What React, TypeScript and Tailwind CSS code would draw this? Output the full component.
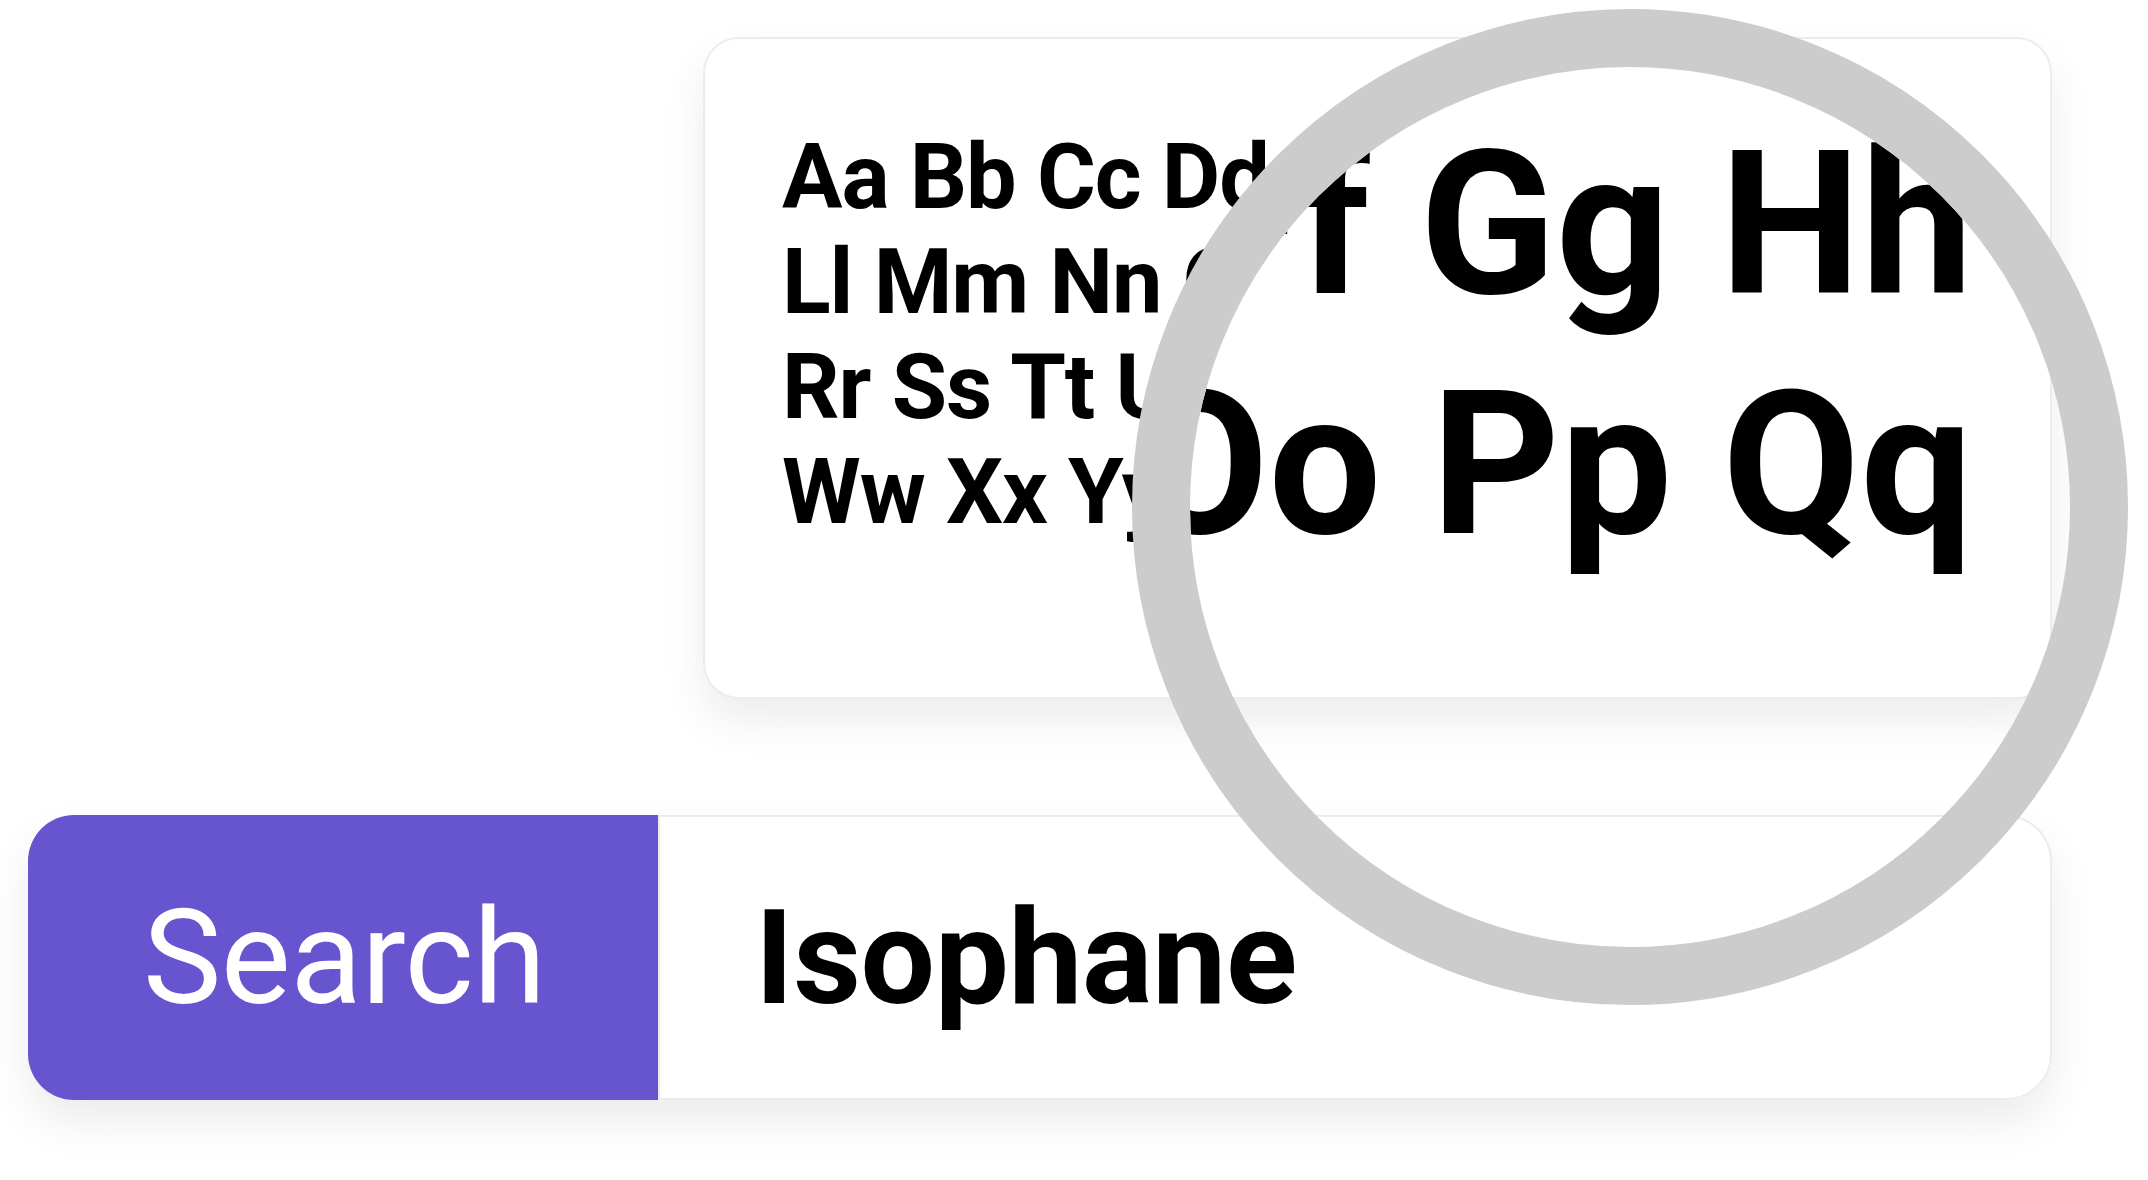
import React from 'react'

const smallLines = ['Aa Bb Cc Dd Ee Ff Gg Hh', 'Ll Mm Nn Oo Pp Qq', 'Rr Ss Tt Uu Vv', 'Ww Xx Yy Zz']
const bigLines = ['Ee Ff Gg Hh', 'Nn Oo Pp Qq']

function SpecimenCard() {
  return (
    <div className="w-[1349px] h-[662px] bg-white border-2 border-[#ececec] rounded-[36px] shadow-[0_22px_44px_rgba(0,0,0,0.075)] pl-[77px] pt-[86px]">
      {/* small glyphs, hidden where the lens sits */}
      <div className="h-[440px] text-[90px] leading-[105px] tracking-[-0.012em] font-bold text-black whitespace-nowrap [mask-image:radial-gradient(circle_at_848px_382px,transparent_446px,black_447px)] [-webkit-mask-image:radial-gradient(circle_at_848px_382px,transparent_446px,black_447px)]">
        {smallLines.map(l => (
          <div key={l}>{l}</div>
        ))}
      </div>
    </div>
  )
}

function SearchBar() {
  return (
    <div className="w-full h-[285px] flex rounded-[46px] shadow-[0_22px_44px_rgba(0,0,0,0.08)]">
      <div className="w-[630px] bg-[#6655cf] rounded-l-[46px] flex items-center pl-[115px]">
        <span className="text-[132px] leading-none tracking-[-0.004em] font-normal text-white">Search</span>
      </div>
      <div className="flex-1 bg-white border-2 border-[#ececec] rounded-r-[46px] flex items-center pl-[95px]">
        <span className="text-[132px] leading-none tracking-[-0.003em] font-bold text-black">Isophane</span>
      </div>
    </div>
  )
}

export default function App() {
  return (
    <div className="relative w-[2148px] h-[1180px] bg-white overflow-hidden font-['Roboto',sans-serif]">
      <div className="flex flex-col items-end gap-[116px] pt-[37px] pl-[28px] pr-[96px]">
        <SpecimenCard />
        <SearchBar />
      </div>

      {/* lens contents */}
      <div className="absolute left-[1190px] top-[67px] w-[880px] h-[880px] rounded-full overflow-hidden">
        <div className="absolute right-[97px] top-[38px] text-right text-[200px] leading-[240px] font-bold text-black whitespace-nowrap">
          {bigLines.map(l => (
            <div key={l}>{l}</div>
          ))}
        </div>
      </div>

      {/* lens ring */}
      <div className="absolute left-[1132px] top-[9px] w-[996px] h-[996px] rounded-full border-[58px] border-[#cccccc]" />
    </div>
  )
}
